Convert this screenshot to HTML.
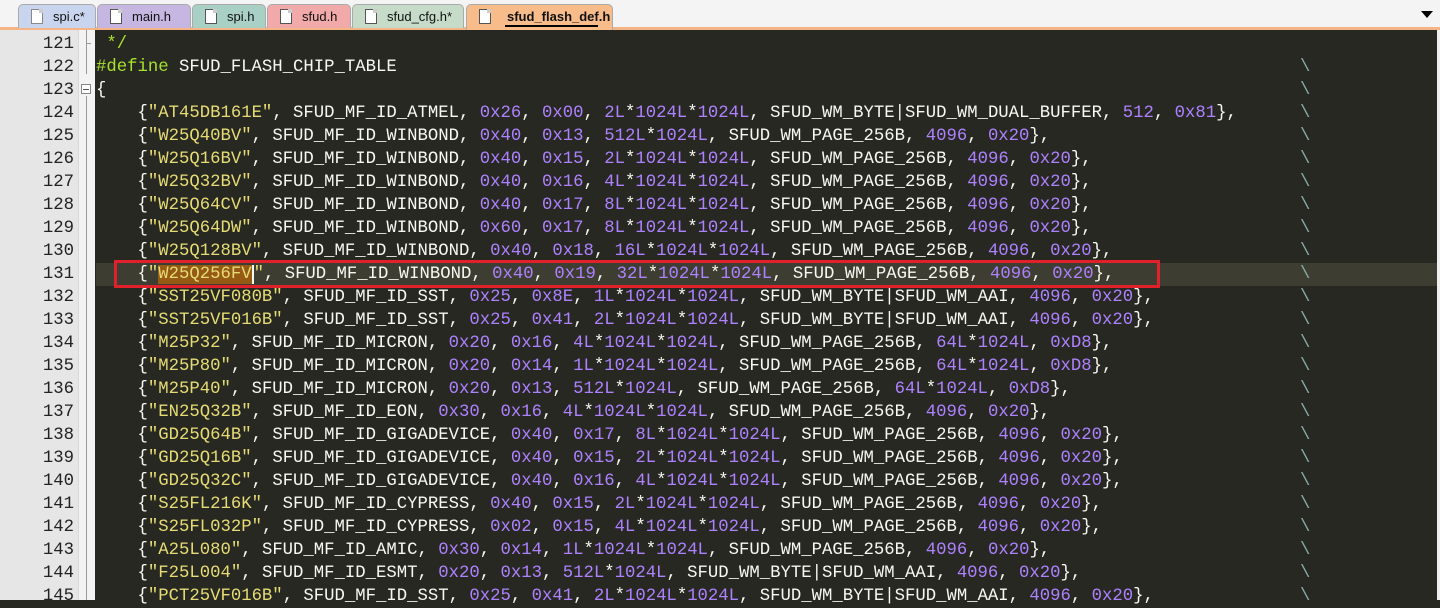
<!DOCTYPE html>
<html><head><meta charset="utf-8"><style>
*{margin:0;padding:0;box-sizing:border-box}
body{width:1440px;height:600px;overflow:hidden;background:#272822;font-family:"Liberation Mono",monospace;position:relative}
#tabs{position:absolute;left:0;top:0;width:1440px;height:30px;background:#f4f4f4;border-bottom:3px solid #f5b486}
.tab{position:absolute;top:4px;height:24px;border-radius:5px 5px 0 0;font:13px "Liberation Sans",sans-serif;color:#111;padding-left:34px;line-height:23px;border:1px solid #aaa;border-bottom:none}
.tab i{position:absolute;left:12px;top:4px;width:12px;height:15px;background:#fff;border:1px solid #555;}
.tab i:after{content:"";position:absolute;right:-1px;top:-1px;width:4px;height:4px;background:#ccc}
#arrow{position:absolute;left:1421px;top:11px;width:0;height:0;border-left:6px solid transparent;border-right:6px solid transparent;border-top:7px solid #000}
#gutter{position:absolute;left:0;top:30px;width:78px;height:570px;background:#e6e6e6}
#fold{position:absolute;left:78px;top:30px;width:17px;height:570px;background:#f3f3f3;border-left:1px solid #d8d8d8}
#foldline{position:absolute;left:86px;top:30px;width:1px;height:44px;background:#999}
#foldbox{position:absolute;left:81px;top:84px;width:10px;height:10px;border:1px solid #888;background:#fff}
#foldbox:after{content:"";position:absolute;left:1px;top:4px;width:6px;height:1px;background:#555}
#w{position:absolute;left:0;top:2px;width:1440px;height:600px}
.ln{position:absolute;left:0;width:74px;text-align:right;font-size:17.3px;color:#222;height:23px;line-height:23px}
.l{position:absolute;left:96px;font-size:17.3px;height:23px;line-height:23px;color:#f8f8f2;white-space:pre}
.bs{position:absolute;left:1300px;font-size:17.3px;color:#8aa;line-height:23px;height:23px}
.s{color:#e6db74}.n{color:#ae81ff}.g{color:#a6e22e}
#hl{position:absolute;left:96px;top:261px;width:1344px;height:23px;background:#3e3d32}
#box{position:absolute;left:114px;top:260px;width:1046px;height:28px;border:3px solid #e0202a}
.sel{background:#955a14}
.cur{border-right:2px solid #f8f8f0}
</style></head><body>
<div id="tabs">
<div class="tab" style="left:18px;width:78px;background:#c9d5ee">spi.c*<i style="border-color:#888"></i></div>
<div class="tab" style="left:97px;width:94px;background:#c5b6e2">main.h<i></i></div>
<div class="tab" style="left:192px;width:74px;background:#a9d0c4">spi.h<i></i></div>
<div class="tab" style="left:267px;width:84px;background:#f1a9a9">sfud.h<i></i></div>
<div class="tab" style="left:352px;width:112px;background:#c6dcc8">sfud_cfg.h*<i></i></div>
<div class="tab" style="left:466px;width:147px;height:26px;background:#f8bc8a;font-weight:bold;padding-left:40px">sfud_flash_def.h<i></i><span style="position:absolute;left:38px;right:14px;top:20px;height:2px;background:#000"></span></div>
<div id="arrow"></div>
</div>
<div id="gutter"></div><div id="fold"></div><div id="foldline"></div><div id="foldbox"></div>
<div style="position:absolute;left:86px;top:96px;width:1px;height:504px;background:#999"></div>
<div style="position:absolute;left:86px;top:43px;width:5px;height:1px;background:#999"></div>
<div id="w">
<div id="hl"></div>
<div class="ln" style="top:31px">121</div><div class="l" style="top:31px"> <span class="g">*/</span></div>
<div class="ln" style="top:54px">122</div><div class="l" style="top:54px"><span class="g">#define</span> SFUD_FLASH_CHIP_TABLE</div>
<div class="ln" style="top:77px">123</div><div class="l" style="top:77px">{</div>
<div class="ln" style="top:100px">124</div><div class="l" style="top:100px">    {<span class="s">"AT45DB161E"</span>, SFUD_MF_ID_ATMEL, <span class="n">0x26</span>, <span class="n">0x00</span>, <span class="n">2L</span>*<span class="n">1024L</span>*<span class="n">1024L</span>, SFUD_WM_BYTE|SFUD_WM_DUAL_BUFFER, <span class="n">512</span>, <span class="n">0x81</span>},</div>
<div class="ln" style="top:123px">125</div><div class="l" style="top:123px">    {<span class="s">"W25Q40BV"</span>, SFUD_MF_ID_WINBOND, <span class="n">0x40</span>, <span class="n">0x13</span>, <span class="n">512L</span>*<span class="n">1024L</span>, SFUD_WM_PAGE_256B, <span class="n">4096</span>, <span class="n">0x20</span>},</div>
<div class="ln" style="top:146px">126</div><div class="l" style="top:146px">    {<span class="s">"W25Q16BV"</span>, SFUD_MF_ID_WINBOND, <span class="n">0x40</span>, <span class="n">0x15</span>, <span class="n">2L</span>*<span class="n">1024L</span>*<span class="n">1024L</span>, SFUD_WM_PAGE_256B, <span class="n">4096</span>, <span class="n">0x20</span>},</div>
<div class="ln" style="top:169px">127</div><div class="l" style="top:169px">    {<span class="s">"W25Q32BV"</span>, SFUD_MF_ID_WINBOND, <span class="n">0x40</span>, <span class="n">0x16</span>, <span class="n">4L</span>*<span class="n">1024L</span>*<span class="n">1024L</span>, SFUD_WM_PAGE_256B, <span class="n">4096</span>, <span class="n">0x20</span>},</div>
<div class="ln" style="top:192px">128</div><div class="l" style="top:192px">    {<span class="s">"W25Q64CV"</span>, SFUD_MF_ID_WINBOND, <span class="n">0x40</span>, <span class="n">0x17</span>, <span class="n">8L</span>*<span class="n">1024L</span>*<span class="n">1024L</span>, SFUD_WM_PAGE_256B, <span class="n">4096</span>, <span class="n">0x20</span>},</div>
<div class="ln" style="top:215px">129</div><div class="l" style="top:215px">    {<span class="s">"W25Q64DW"</span>, SFUD_MF_ID_WINBOND, <span class="n">0x60</span>, <span class="n">0x17</span>, <span class="n">8L</span>*<span class="n">1024L</span>*<span class="n">1024L</span>, SFUD_WM_PAGE_256B, <span class="n">4096</span>, <span class="n">0x20</span>},</div>
<div class="ln" style="top:238px">130</div><div class="l" style="top:238px">    {<span class="s">"W25Q128BV"</span>, SFUD_MF_ID_WINBOND, <span class="n">0x40</span>, <span class="n">0x18</span>, <span class="n">16L</span>*<span class="n">1024L</span>*<span class="n">1024L</span>, SFUD_WM_PAGE_256B, <span class="n">4096</span>, <span class="n">0x20</span>},</div>
<div class="ln" style="top:261px">131</div><div class="l" style="top:261px">    {<span class="s">"<span class="sel cur">W25Q256FV</span>"</span>, SFUD_MF_ID_WINBOND, <span class="n">0x40</span>, <span class="n">0x19</span>, <span class="n">32L</span>*<span class="n">1024L</span>*<span class="n">1024L</span>, SFUD_WM_PAGE_256B, <span class="n">4096</span>, <span class="n">0x20</span>},</div>
<div class="ln" style="top:284px">132</div><div class="l" style="top:284px">    {<span class="s">"SST25VF080B"</span>, SFUD_MF_ID_SST, <span class="n">0x25</span>, <span class="n">0x8E</span>, <span class="n">1L</span>*<span class="n">1024L</span>*<span class="n">1024L</span>, SFUD_WM_BYTE|SFUD_WM_AAI, <span class="n">4096</span>, <span class="n">0x20</span>},</div>
<div class="ln" style="top:307px">133</div><div class="l" style="top:307px">    {<span class="s">"SST25VF016B"</span>, SFUD_MF_ID_SST, <span class="n">0x25</span>, <span class="n">0x41</span>, <span class="n">2L</span>*<span class="n">1024L</span>*<span class="n">1024L</span>, SFUD_WM_BYTE|SFUD_WM_AAI, <span class="n">4096</span>, <span class="n">0x20</span>},</div>
<div class="ln" style="top:330px">134</div><div class="l" style="top:330px">    {<span class="s">"M25P32"</span>, SFUD_MF_ID_MICRON, <span class="n">0x20</span>, <span class="n">0x16</span>, <span class="n">4L</span>*<span class="n">1024L</span>*<span class="n">1024L</span>, SFUD_WM_PAGE_256B, <span class="n">64L</span>*<span class="n">1024L</span>, <span class="n">0xD8</span>},</div>
<div class="ln" style="top:353px">135</div><div class="l" style="top:353px">    {<span class="s">"M25P80"</span>, SFUD_MF_ID_MICRON, <span class="n">0x20</span>, <span class="n">0x14</span>, <span class="n">1L</span>*<span class="n">1024L</span>*<span class="n">1024L</span>, SFUD_WM_PAGE_256B, <span class="n">64L</span>*<span class="n">1024L</span>, <span class="n">0xD8</span>},</div>
<div class="ln" style="top:376px">136</div><div class="l" style="top:376px">    {<span class="s">"M25P40"</span>, SFUD_MF_ID_MICRON, <span class="n">0x20</span>, <span class="n">0x13</span>, <span class="n">512L</span>*<span class="n">1024L</span>, SFUD_WM_PAGE_256B, <span class="n">64L</span>*<span class="n">1024L</span>, <span class="n">0xD8</span>},</div>
<div class="ln" style="top:399px">137</div><div class="l" style="top:399px">    {<span class="s">"EN25Q32B"</span>, SFUD_MF_ID_EON, <span class="n">0x30</span>, <span class="n">0x16</span>, <span class="n">4L</span>*<span class="n">1024L</span>*<span class="n">1024L</span>, SFUD_WM_PAGE_256B, <span class="n">4096</span>, <span class="n">0x20</span>},</div>
<div class="ln" style="top:422px">138</div><div class="l" style="top:422px">    {<span class="s">"GD25Q64B"</span>, SFUD_MF_ID_GIGADEVICE, <span class="n">0x40</span>, <span class="n">0x17</span>, <span class="n">8L</span>*<span class="n">1024L</span>*<span class="n">1024L</span>, SFUD_WM_PAGE_256B, <span class="n">4096</span>, <span class="n">0x20</span>},</div>
<div class="ln" style="top:445px">139</div><div class="l" style="top:445px">    {<span class="s">"GD25Q16B"</span>, SFUD_MF_ID_GIGADEVICE, <span class="n">0x40</span>, <span class="n">0x15</span>, <span class="n">2L</span>*<span class="n">1024L</span>*<span class="n">1024L</span>, SFUD_WM_PAGE_256B, <span class="n">4096</span>, <span class="n">0x20</span>},</div>
<div class="ln" style="top:468px">140</div><div class="l" style="top:468px">    {<span class="s">"GD25Q32C"</span>, SFUD_MF_ID_GIGADEVICE, <span class="n">0x40</span>, <span class="n">0x16</span>, <span class="n">4L</span>*<span class="n">1024L</span>*<span class="n">1024L</span>, SFUD_WM_PAGE_256B, <span class="n">4096</span>, <span class="n">0x20</span>},</div>
<div class="ln" style="top:491px">141</div><div class="l" style="top:491px">    {<span class="s">"S25FL216K"</span>, SFUD_MF_ID_CYPRESS, <span class="n">0x40</span>, <span class="n">0x15</span>, <span class="n">2L</span>*<span class="n">1024L</span>*<span class="n">1024L</span>, SFUD_WM_PAGE_256B, <span class="n">4096</span>, <span class="n">0x20</span>},</div>
<div class="ln" style="top:514px">142</div><div class="l" style="top:514px">    {<span class="s">"S25FL032P"</span>, SFUD_MF_ID_CYPRESS, <span class="n">0x02</span>, <span class="n">0x15</span>, <span class="n">4L</span>*<span class="n">1024L</span>*<span class="n">1024L</span>, SFUD_WM_PAGE_256B, <span class="n">4096</span>, <span class="n">0x20</span>},</div>
<div class="ln" style="top:537px">143</div><div class="l" style="top:537px">    {<span class="s">"A25L080"</span>, SFUD_MF_ID_AMIC, <span class="n">0x30</span>, <span class="n">0x14</span>, <span class="n">1L</span>*<span class="n">1024L</span>*<span class="n">1024L</span>, SFUD_WM_PAGE_256B, <span class="n">4096</span>, <span class="n">0x20</span>},</div>
<div class="ln" style="top:560px">144</div><div class="l" style="top:560px">    {<span class="s">"F25L004"</span>, SFUD_MF_ID_ESMT, <span class="n">0x20</span>, <span class="n">0x13</span>, <span class="n">512L</span>*<span class="n">1024L</span>, SFUD_WM_BYTE|SFUD_WM_AAI, <span class="n">4096</span>, <span class="n">0x20</span>},</div>
<div class="ln" style="top:583px">145</div><div class="l" style="top:583px">    {<span class="s">"PCT25VF016B"</span>, SFUD_MF_ID_SST, <span class="n">0x25</span>, <span class="n">0x41</span>, <span class="n">2L</span>*<span class="n">1024L</span>*<span class="n">1024L</span>, SFUD_WM_BYTE|SFUD_WM_AAI, <span class="n">4096</span>, <span class="n">0x20</span>},</div>

<div class="bs" style="top:54px">\</div><div class="bs" style="top:77px">\</div><div class="bs" style="top:100px">\</div><div class="bs" style="top:123px">\</div><div class="bs" style="top:146px">\</div><div class="bs" style="top:169px">\</div><div class="bs" style="top:192px">\</div><div class="bs" style="top:215px">\</div><div class="bs" style="top:238px">\</div><div class="bs" style="top:261px">\</div><div class="bs" style="top:284px">\</div><div class="bs" style="top:307px">\</div><div class="bs" style="top:330px">\</div><div class="bs" style="top:353px">\</div><div class="bs" style="top:376px">\</div><div class="bs" style="top:399px">\</div><div class="bs" style="top:422px">\</div><div class="bs" style="top:445px">\</div><div class="bs" style="top:468px">\</div><div class="bs" style="top:491px">\</div><div class="bs" style="top:514px">\</div><div class="bs" style="top:537px">\</div><div class="bs" style="top:560px">\</div><div class="bs" style="top:583px">\</div>
</div>
<div id="box"></div>
<div style="position:absolute;left:1437px;top:30px;width:3px;height:570px;background:#f0f0f0"></div>
</body></html>
